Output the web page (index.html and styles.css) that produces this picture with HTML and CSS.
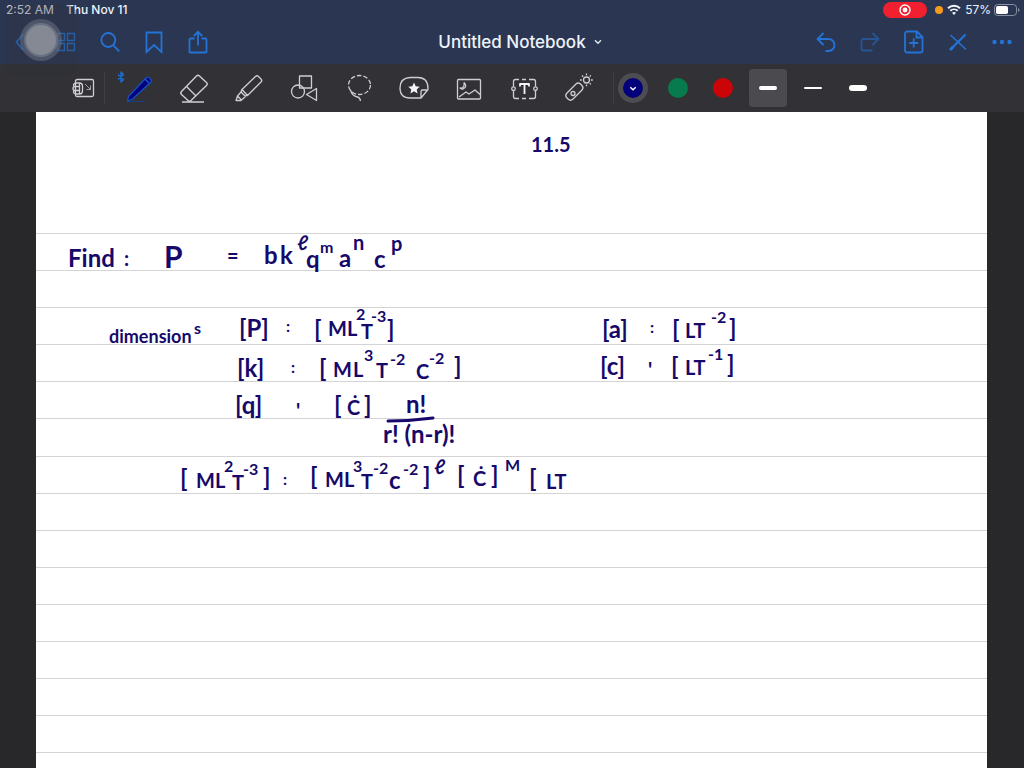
FILE: index.html
```html
<!DOCTYPE html>
<html lang="en">
<head>
<meta charset="utf-8">
<meta name="viewport" content="width=device-width, initial-scale=1">
<title>Untitled Notebook</title>
<link rel="stylesheet" href="styles.css">
</head>
<body>
<div class="app">
  <header class="header">
    <div class="status">
      <span class="time">2:52 AM</span>
      <span class="date">Thu Nov 11</span>
      <span class="recording" role="img" aria-label="Screen recording">
        <svg width="14" height="14" viewBox="0 0 14 14"><circle cx="7" cy="7" r="5" fill="none" stroke="#fff" stroke-width="1.4"/><circle cx="7" cy="7" r="2.4" fill="#fff"/></svg>
      </span>
      <span class="mic-dot"></span>
      <svg class="wifi" width="14" height="12" viewBox="0 0 14 12" fill="none" stroke="#f3f6fb" stroke-width="1.9"><path d="M1 4.2a8.7 8.7 0 0 1 12 0M3.3 6.8a5.4 5.4 0 0 1 7.4 0"/><path d="M7 11 5 8.8a3 3 0 0 1 4 0z" fill="#f3f6fb" stroke="none"/></svg>
      <span class="percent">57%</span>
      <svg class="battery" width="26" height="12" viewBox="0 0 26 12"><rect x=".5" y=".5" width="22" height="11" rx="3.2" fill="none" stroke="#8790a2"/><rect x="2" y="2" width="12" height="8" rx="1.8" fill="#fff"/><path d="M24 4v4q1.5-.7 1.5-2T24 4" fill="#8790a2"/></svg>
    </div>
    <nav class="nav">
      <div class="nav-side">
        <button class="nav-btn" aria-label="Back"><svg width="24" height="24" viewBox="0 0 24 24"><path d="M13 4.500 6.500 12l6.500 8"/></svg></button>
        <button class="nav-btn" aria-label="Thumbnails"><svg width="24" height="24" viewBox="0 0 24 24"><path d="M3.500 3.500h7v7h-7zM13.500 3.500h7v7h-7zM3.500 13.500h7v7h-7zM13.500 13.500h7v7h-7z" stroke-width="1.400"/></svg></button>
        <button class="nav-btn" aria-label="Search"><svg width="24" height="24" viewBox="0 0 24 24"><circle cx="10.300" cy="10" r="7"/><path d="m15.300 15.300 6 6"/></svg></button>
        <button class="nav-btn" aria-label="Bookmark"><svg width="24" height="24" viewBox="0 0 24 24"><path d="M4.500 2.500h15v19.500L12 15l-7.500 7z"/></svg></button>
        <button class="nav-btn" aria-label="Share"><svg width="24" height="24" viewBox="0 0 24 24"><path d="M8.500 8.500h-4a1 1 0 0 0-1 1v12a1 1 0 0 0 1 1h15a1 1 0 0 0 1-1v-12a1 1 0 0 0-1-1h-4M12 15.500V2M7.800 6 12 1.800 16.200 6"/></svg></button>
      </div>
      <button class="title">Untitled Notebook<svg width="8" height="6" viewBox="0 0 8 6"><path d="m1 1.200 3 3 3-3" fill="none" stroke="#dfe6f2" stroke-width="1.400"/></svg></button>
      <div class="nav-side nav-right">
        <button class="nav-btn" aria-label="Undo"><svg width="24" height="24" viewBox="0 0 24 24"><path d="M9.500 3 3.500 9l6 6M3.500 9h11a6 6 0 0 1 0 12h-3"/></svg></button>
        <button class="nav-btn dim" aria-label="Redo"><svg width="24" height="24" viewBox="0 0 24 24"><path d="m14.500 3 6 6-6 6M20.500 9H5.500a2 2 0 0 0-2 2v7.500a2 2 0 0 0 2 2h9"/></svg></button>
        <button class="nav-btn" aria-label="Add page"><svg width="24" height="24" viewBox="0 0 24 24"><path d="M5 1.500h10l5.500 5.500v13.500a2 2 0 0 1-2 2H5a2 2 0 0 1-2-2v-17a2 2 0 0 1 2-2zM14.500 2v5.500h5.500M11.700 8.500v9M7.200 13h9"/></svg></button>
        <button class="nav-btn" aria-label="Stop editing"><svg width="24" height="24" viewBox="0 0 24 24"><path d="M4.500 5 20 19.500" stroke-width="1.600"/><path d="M19.500 4.500 7 17" stroke-width="2.200"/><path d="m7.500 16.500-3.500 3.500" stroke-width="3"/></svg></button>
        <button class="nav-btn" aria-label="More"><svg width="24" height="24" viewBox="0 0 24 24"><g fill="#2473d6" stroke="none"><circle cx="4.500" cy="12" r="2.200"/><circle cx="12" cy="12" r="2.200"/><circle cx="19.500" cy="12" r="2.200"/></g></svg></button>
      </div>
    </nav>
  </header>

  <div class="toolbar" role="toolbar" aria-label="Tools">
    <button class="tool zoom-tool" aria-label="Zoom window"><svg width="26" height="24" viewBox="0 0 26 24"><rect x="5.500" y="3.500" width="18" height="17" rx="1.500"/><path d="M5.500 7h4q3 0 3 3v5q0 3-3 3h-4M9.500 7v11M5.500 10.500h4M5.500 14.500h4"/><path d="M5 7.500q-1.500 0-1.500 1.500T5 10.500M5 10.500q-2 0-2 2t2 2M5 14.500q-1.500 0-1.500 1.500T5 17.500"/><path d="m15 8 5.500 5.500M20.500 9.500v4h-4" stroke-width=".7"/></svg></button>
    <span class="divider"></span>
    <button class="tool pen" aria-label="Pen" aria-pressed="true">
      <svg class="bluetooth" width="8" height="12" viewBox="0 0 8 12"><path d="m1 3.500 5.500 5L4 11V1l2.500 2.500L1 8.500" fill="none" stroke="#1b6bd0" stroke-width="1.500"/></svg>
      <svg width="32" height="32" viewBox="0 0 32 32"><path d="M5 29.500h17" stroke="#16407e" stroke-width="1"/><path d="M5.500 24.500 23.500 5.500q1.500-1 3.500 1t1 3.500L9.500 27l-5 2z" fill="#02007c" stroke="#1450c0" stroke-width="1.300"/><path d="m22 7 4 4" stroke="#195dcb"/></svg>
    </button>
    <button class="tool" aria-label="Eraser"><svg width="32" height="32" viewBox="0 0 32 32"><path d="M3.500 22.500q-1.500-1.500 0-3L18.500 4q1.500-1.500 3 0l7 6.500q1.500 1.500 0 3L13 28.500q-1.500 1.500-3 0zM8.500 14.500l9.500 9.500M4 30h22" stroke-width="1.400"/></svg></button>
    <button class="tool" aria-label="Highlighter"><svg width="32" height="32" viewBox="0 0 32 32"><path d="m9 17.500 13.500-13q1.500-1.500 3 0l2.500 2.500q1.500 1.500 0 3l-13.500 13.500zM9 17.500q-1.500 2 0 3.500l2 2q1.500 1.500 3.500.5M8 20l-3.500 4 4 4 4-3.500M4.500 24 3 28.500h5l.5-.5"/></svg></button>
    <button class="tool" aria-label="Shapes"><svg width="32" height="32" viewBox="0 0 32 32"><path d="M11.500 4h12v12h-12z"/><circle cx="10" cy="19.500" r="6.500"/><path d="m28.500 16.500-10 6 10 6z"/></svg></button>
    <button class="tool" aria-label="Lasso"><svg width="32" height="32" viewBox="0 0 32 32"><ellipse cx="16.500" cy="13" rx="11" ry="9.500" stroke-dasharray="4.500 2"/><path d="M7.500 18q1.500 6 7 7 2.500.5 3 4"/></svg></button>
    <button class="tool" aria-label="Elements"><svg width="32" height="32" viewBox="0 0 32 32"><path d="M12 5.500h8q10 0 10 11v1l-7 8.500h-11q-10 0-10-10t10-10.500zM29.500 18h-5q-1.500 0-1.500 1.500v6.500"/><path d="m16 10.500 1.700 3.800 4 .4-3 2.700.9 4-3.600-2.100-3.600 2.100.9-4-3-2.700 4-.4z" fill="#f5f5f7" stroke="none"/></svg></button>
    <button class="tool" aria-label="Image"><svg width="32" height="32" viewBox="0 0 32 32"><rect x="4.500" y="7.500" width="23" height="19.500" rx="1"/><path d="M11 10.500q4 4-1 6.500-2 .5-3-1 5 .5 4-5.500M6 25l7-5 3 2 6-4 5 4.500"/></svg></button>
    <button class="tool" aria-label="Text"><svg width="32" height="32" viewBox="0 0 32 32"><path d="M5.500 14.500v-5q0-2 2-2H11m3 0h4m3 0h4.500q2 0 2 2v5M5.500 19v5.500q0 2 2 2H11m3 0h4m3 0h4.500q2 0 2-2V19"/><circle cx="5.500" cy="16.700" r="1.800"/><circle cx="27.500" cy="16.700" r="1.800"/><path d="M12 14.500v-2.500h9v2.500M16.500 12v10" stroke="#f5f5f7" stroke-width="1.800"/></svg></button>
    <button class="tool" aria-label="Laser pointer"><svg width="32" height="32" viewBox="0 0 32 32"><path d="m4 21 9-9q2-2 4.500 0l1.500 1.500q2 2.500 0 4.500l-9 9q-2.500 2.500-5 0L4 26q-2.500-2.500 0-5z"/><circle cx="10" cy="21.500" r="2"/><circle cx="23.500" cy="8" r="3"/><path d="M23.500 1.500v1.800m0 9.200v1.800M17 8h1.800m9.200 0h1.800M19 3.500l1.200 1.200m6.500 6.500 1.200 1.200m0-9-1.200 1.200"/></svg></button>
    <span class="divider push"></span>
    <div class="swatches">
      <button class="swatch current" aria-label="Navy"><svg width="20" height="20" viewBox="0 0 20 20"><circle cx="10" cy="10" r="10" fill="#02007a"/><path d="m7.300 9.300 2.700 2.500 2.700-2.500" fill="none" stroke="#fff" stroke-width="1.400"/></svg></button>
      <button class="swatch" aria-label="Green"><svg width="20" height="20" viewBox="0 0 20 20"><circle cx="10" cy="10" r="10" fill="#087b4e"/></svg></button>
      <button class="swatch" aria-label="Red"><svg width="20" height="20" viewBox="0 0 20 20"><circle cx="10" cy="10" r="10" fill="#cb0507"/></svg></button>
      <button class="swatch selected" aria-label="Medium stroke"><span class="stroke medium"></span></button>
      <button class="swatch" aria-label="Thin stroke"><span class="stroke thin"></span></button>
      <button class="swatch" aria-label="Thick stroke"><span class="stroke thick"></span></button>
    </div>
  </div>

  <main class="desk">
    <svg class="sheet" viewBox="36 112 951 656" role="group" aria-label="Notebook page">
      <path class="rules" d="M36 233.500h951M36 270.500h951M36 307.500h951M36 344.500h951M36 381.500h951M36 418.500h951M36 456.500h951M36 493.500h951M36 530.500h951M36 567.500h951M36 604.500h951M36 641.500h951M36 678.500h951M36 715.500h951M36 752.500h951"/>
      <g class="ink">
        <text class="m" x="531" y="152">11.5</text>

        <text class="l" x="68" y="267">Find</text><text class="m" x="124" y="266">:</text>
        <text class="xl" x="164" y="268">P</text><text class="m" x="227" y="263">=</text>
        <text class="l" x="264" y="264">b</text><text class="l" x="280" y="264">k</text><text class="m" x="297" y="250">ℓ</text>
        <text class="l" x="306" y="268">q</text><text class="s" x="320" y="253">m</text><text class="l" x="339" y="267">a</text>
        <text class="m" x="353" y="250">n</text><text class="l" x="374" y="268">c</text><text class="m" x="391" y="251">p</text>

        <text class="d" x="109" y="343">dimension</text><text class="s" x="194" y="334">s</text>
        <text class="l" x="239" y="337">[P]</text><text class="s" x="286" y="332">:</text>
        <text class="l" x="314" y="338">[</text><text class="m" x="328" y="336">ML</text><text class="s" x="356" y="320">2</text>
        <text class="m" x="361" y="339">T</text><text class="s" x="371" y="322">-3</text><text class="l" x="387" y="338">]</text>
        <text class="l" x="602" y="338">[a]</text><text class="s" x="650" y="333">:</text>
        <text class="l" x="672" y="338">[</text><text class="m" x="685" y="338">LT</text><text class="s" x="711" y="323">-2</text><text class="l" x="729" y="337">]</text>

        <text class="l" x="237" y="377">[k]</text><text class="s" x="291" y="373">:</text>
        <text class="l" x="319" y="377">[</text><text class="m" x="333" y="377">M</text><text class="m" x="353" y="377">L</text><text class="s" x="364" y="361">3</text>
        <text class="m" x="376" y="378">T</text><text class="s" x="390" y="365">-2</text><text class="m" x="416" y="379">C</text>
        <text class="s" x="429" y="364">-2</text><text class="l" x="454" y="375">]</text>
        <text class="l" x="600" y="375">[c]</text><text class="m" x="648" y="377">'</text>
        <text class="l" x="671" y="375">[</text><text class="m" x="685" y="375">LT</text><text class="s" x="708" y="360">-1</text><text class="l" x="727" y="373">]</text>

        <text class="l" x="235" y="414">[q]</text><text class="m" x="296" y="418">'</text>
        <text class="l" x="334" y="414">[</text><text class="m" x="347" y="415">Ċ</text><text class="l" x="364" y="414">]</text>
        <text class="l" x="406" y="413">n!</text>
        <path class="bar" d="M388 421q23 0 45-3"/>
        <text class="l" x="383" y="443">r! (n-r)!</text>

        <text class="l" x="180" y="487">[</text><text class="m" x="196" y="488">ML</text><text class="s" x="224" y="472">2</text>
        <text class="m" x="232" y="490">T</text><text class="s" x="243" y="475">-3</text><text class="l" x="263" y="486">]</text><text class="s" x="283" y="485">:</text>
        <text class="l" x="310" y="485">[</text><text class="m" x="325" y="487">ML</text><text class="s" x="353" y="472">3</text>
        <text class="m" x="361" y="489">T</text><text class="s" x="373" y="474">-2</text><text class="l" x="389" y="489">c</text>
        <text class="s" x="403" y="475">-2</text><text class="l" x="423" y="485">]</text><text class="m" x="434" y="474">ℓ</text>
        <text class="l" x="457" y="484">[</text><text class="m" x="473" y="486">Ċ</text><text class="l" x="491" y="484">]</text><text class="s" x="505" y="471">M</text>
        <text class="l" x="529" y="487">[</text><text class="m" x="546" y="489">LT</text>
      </g>
    </svg>
  </main>

  <button class="assist" aria-label="AssistiveTouch"><span class="assist-ring"></span></button>
</div>
</body>
</html>
```

FILE: styles.css
```css
* { box-sizing: border-box; }
body { margin: 0; background: #28272a; font-family: Inter, "Liberation Sans", sans-serif; }
button { margin: 0; padding: 0; border: 0; background: none; color: inherit; font: inherit; display: flex; align-items: center; justify-content: center; }
svg { display: block; }

.app { position: relative; height: 100vh; overflow: hidden; display: flex; flex-direction: column; }

.header { background: #2b3752; color: #eef3fa; }
.status { display: flex; align-items: center; height: 20px; padding: 0 4px 0 6px; font-size: 12px; line-height: 20px; }
.time { color: #e6eaf2; }
.date { margin-left: 12px; font-weight: 500; }
.recording { display: flex; align-items: center; justify-content: center; width: 44px; height: 16px; margin-left: auto; border-radius: 8px; background: #f0202e; }
.mic-dot { width: 8px; height: 8px; margin-left: 8px; border-radius: 50%; background: #f59a1b; }
.wifi { margin-left: 4px; }
.percent { margin: 0 3px 0 4px; }

.nav { display: grid; grid-template-columns: 1fr auto 1fr; align-items: center; height: 44px; }
.nav-side { display: flex; }
.nav-right { justify-content: flex-end; }
.nav-btn { width: 44px; height: 44px; }
.nav-btn svg { fill: none; stroke: #2473d6; stroke-width: 1.8; }
.dim { opacity: .5; }
.title { gap: 8px; padding-left: 16px; font-size: 17px; font-weight: 500; line-height: 24px; }

.toolbar { display: flex; align-items: center; height: 48px; padding-left: 62px; background: #323135; }
.tool { position: relative; width: 55px; height: 48px; }
.tool svg { fill: none; stroke: #cfcfd2; stroke-width: 1.3; stroke-linejoin: round; }
.zoom-tool { width: 42px; }
.tool .bluetooth { position: absolute; left: 6px; top: 7px; }
.divider { width: 1px; height: 32px; margin-right: 6px; background: #3f3e43; }
.push { margin: 0 0 0 7px; }
.swatches { display: flex; align-items: center; gap: 7px; }
.swatch { width: 38px; height: 38px; border-radius: 4px; }
.current svg { border-radius: 50%; box-shadow: 0 0 0 5px #4c4c53; }
.selected { background: #4b4a4f; }
.stroke { width: 18px; border-radius: 3px; background: #fff; }
.thin { height: 2px; }
.medium { height: 4px; }
.thick { height: 6px; }

.desk { flex: 1; min-height: 0; padding: 0 37px 0 36px; background: #28272a; overflow: hidden; }
.sheet { width: 100%; min-height: 100%; background: #fff; }
.rules { fill: none; stroke: #d4d4d6; stroke-width: 1; }
.ink { fill: #16096a; font-family: Lato, "Liberation Sans", sans-serif; font-weight: 700; }
.bar { fill: none; stroke: #16096a; stroke-width: 3; stroke-linecap: round; }
.xl { font-size: 30px; }
.l { font-size: 24px; }
.m { font-size: 20px; }
.d { font-size: 18px; }
.s { font-size: 16px; }

.assist { position: absolute; left: 4px; top: 4px; width: 73px; height: 72px; border-radius: 12px; background: rgba(48, 50, 58, .3); }
.assist-ring { width: 34px; height: 34px; border: 2px solid #687083; border-radius: 50%; background: #858994; box-shadow: 0 0 0 4px rgba(112, 118, 134, .5); }
```
